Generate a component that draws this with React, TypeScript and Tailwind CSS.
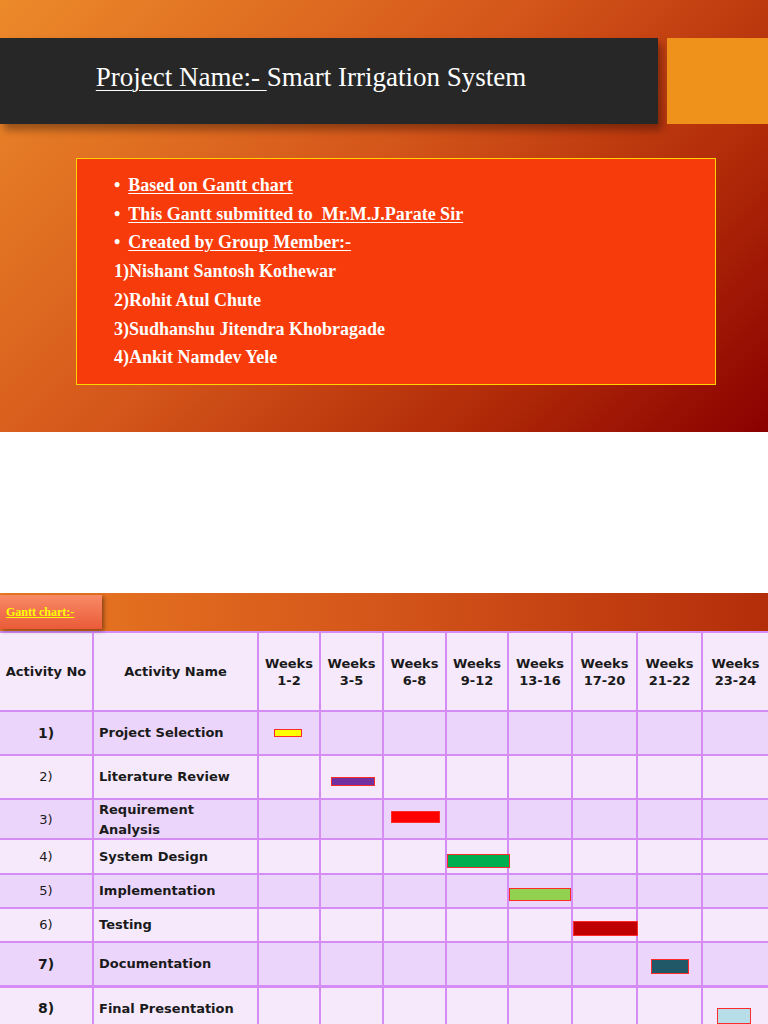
import React from "react";

const cols = [94, 165, 62, 63, 63, 62, 64, 65, 65, 65];
const weeks = ["1-2", "3-5", "6-8", "9-12", "13-16", "17-20", "21-22", "23-24"];
type Bar = { col: number; left: number; width: number; top: number; h: number; color: string };
const rows: { no: string; name: string; h: number; bg: string; bar: Bar }[] = [
  { no: "1)", name: "Project Selection", h: 44, bg: "bg-[#ecd5fb]", bar: { col: 0, left: 15, width: 28, top: 17, h: 8, color: "#ffff00" } },
  { no: "2)", name: "Literature Review", h: 44, bg: "bg-[#f5e9fb]", bar: { col: 1, left: 10, width: 44, top: 21, h: 9, color: "#7030a0" } },
  { no: "3)", name: "Requirement Analysis", h: 40, bg: "bg-[#ecd5fb]", bar: { col: 2, left: 7, width: 49, top: 11, h: 12, color: "#ff0000" } },
  { no: "4)", name: "System Design", h: 35, bg: "bg-[#f5e9fb]", bar: { col: 3, left: 0, width: 63, top: 14, h: 14, color: "#00b050" } },
  { no: "5)", name: "Implementation", h: 34, bg: "bg-[#ecd5fb]", bar: { col: 4, left: 0, width: 62, top: 13, h: 13, color: "#92d050" } },
  { no: "6)", name: "Testing", h: 34, bg: "bg-[#f5e9fb]", bar: { col: 5, left: 0, width: 65, top: 12, h: 15, color: "#c00000" } },
  { no: "7)", name: "Documentation", h: 44, bg: "bg-[#ecd5fb]", bar: { col: 6, left: 13, width: 38, top: 16, h: 15, color: "#215868" } },
  { no: "8)", name: "Final Presentation", h: 44, bg: "bg-[#f5e9fb]", bar: { col: 7, left: 14, width: 34, top: 20, h: 16, color: "#b7dde8" } },
];

const border = "border-[#d58cf5]";

export default function App() {
  const tmpl = cols.map((c) => `${c}px`).join(" ");
  return (
    <div className="w-[768px] h-[1024px] overflow-hidden bg-white" style={{ fontFamily: "'Liberation Serif', serif" }}>
      {/* Top slide */}
      <div className="h-[432px] relative bg-[linear-gradient(135deg,#ec8a2a_0%,#d4551a_45%,#b02a08_75%,#8a0000_100%)]">
        <div className="pt-[38px] flex">
          <div className="w-[658px] h-[86px] bg-[#272727] shadow-[4px_6px_8px_rgba(0,0,0,0.35)] flex items-center justify-center">
            <span className="text-white text-[27px] leading-none -mt-2 ml-[-36px]">
              <span className="underline underline-offset-4 decoration-1">Project Name:- </span>Smart Irrigation System
            </span>
          </div>
          <div className="ml-[9px] flex-1 h-[86px] bg-[#ef921c]" />
        </div>
        <div className="mt-[34px] ml-[76px] w-[640px] h-[227px] bg-[#f73b0a] border border-[#ffd400] pl-[37px] pt-[12px] text-white font-bold text-[18px] leading-[28.7px]">
          {["Based on Gantt chart", "This Gantt submitted to  Mr.M.J.Parate Sir", "Created by Group Member:-"].map((t) => (
            <div key={t} className="flex">
              <span className="mr-[8px]">•</span>
              <span className="underline underline-offset-2 whitespace-pre">{t}</span>
            </div>
          ))}
          <div>1)Nishant Santosh Kothewar</div>
          <div>2)Rohit Atul Chute</div>
          <div>3)Sudhanshu Jitendra Khobragade</div>
          <div>4)Ankit Namdev Yele</div>
        </div>
      </div>
      <div className="h-[161px]" />
      {/* Gantt slide */}
      <div className="h-[38px] bg-[linear-gradient(90deg,#e97a22_0%,#d4551a_50%,#b42d0a_100%)] flex items-center">
        <div className="w-[102px] h-[34px] bg-[linear-gradient(180deg,#f98a66,#ea5b38)] shadow-[2px_2px_4px_rgba(0,0,0,0.4)] flex items-center pl-[6px]">
          <span className="text-[#ffff00] font-bold text-[12px] underline">Gantt chart:-</span>
        </div>
      </div>
      <div style={{ fontFamily: "'DejaVu Sans', sans-serif" }} className="text-[13px] font-bold text-[#1a1a1a]">
        <div className={`grid bg-[#f5e9fb] h-[79px] border-t-2 ${border}`} style={{ gridTemplateColumns: tmpl }}>
          <div className={`flex items-center justify-center border-r-2 ${border}`}>Activity No</div>
          <div className={`flex items-center justify-center border-r-2 ${border}`}>Activity Name</div>
          {weeks.map((w) => (
            <div key={w} className={`flex flex-col items-center justify-center text-center leading-[17px] border-r-2 ${border} last:border-r-0`}>
              <span>Weeks</span>
              <span>{w}</span>
            </div>
          ))}
        </div>
        {rows.map((r, i) => (
          <div key={r.no} className={`grid ${r.bg} border-t-2 ${border} ${i === 7 ? "border-t-[3px]" : ""}`} style={{ gridTemplateColumns: tmpl, height: r.h }}>
            <div className={`flex items-center justify-center border-r-2 ${border} ${i === 0 || i === 6 || i === 7 ? "text-[14px]" : "font-normal"}`}>{r.no}</div>
            <div className={`flex items-center pl-[5px] border-r-2 ${border}`}>{r.name}</div>
            {weeks.map((w, c) => (
              <div key={w} className={`relative border-r-2 ${border} last:border-r-0`}>
                {r.bar.col === c && (
                  <div
                    className="absolute border border-[#ff2a2a]"
                    style={{ left: r.bar.left, width: r.bar.width, top: r.bar.top, height: r.bar.h, background: r.bar.color }}
                  />
                )}
              </div>
            ))}
          </div>
        ))}
      </div>
    </div>
  );
}
